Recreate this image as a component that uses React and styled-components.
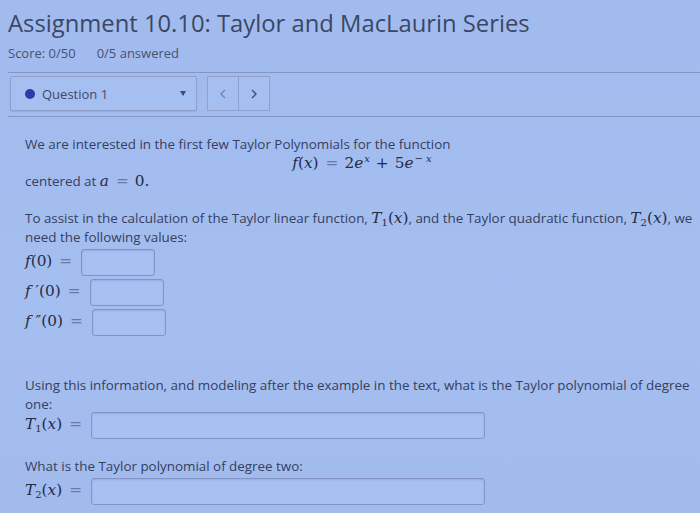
import React from 'react';
import styled, { createGlobalStyle } from 'styled-components';

const GlobalStyle = createGlobalStyle`
    html, body {
        margin: 0;
        padding: 0;
        background: #a3bcef;
    }
    body {
        font-family: 'Open Sans', 'Liberation Sans', sans-serif;
        color: #34405f;
    }
`;

const Page = styled.div`
    width: 700px;
    height: 513px;
    overflow: hidden;
    background: linear-gradient(180deg, #a2bbee 0%, #a5bef0 60%, #a2bbec 100%);
`;

const Header = styled.header`
    padding: 8px 0 0 8px;
`;

const Title = styled.h1`
    margin: 0;
    font-size: 23.8px;
    font-weight: 400;
    line-height: 30px;
    color: #3a4766;
`;

const ScoreRow = styled.div`
    display: flex;
    gap: 21px;
    margin-top: 6px;
    font-size: 13px;
    line-height: 18px;
    color: #46536f;
`;

const Toolbar = styled.div`
    display: flex;
    align-items: center;
    gap: 10px;
    margin: 10px 0 0 8px;
    padding: 3px 0 5px 2px;
    border-top: 1px solid #8596c0;
    border-bottom: 1px solid #8596c0;
`;

const Dropdown = styled.div`
    display: flex;
    align-items: center;
    width: 187px;
    height: 35px;
    box-sizing: border-box;
    padding: 0 10px 0 14px;
    border: 1px solid #8e9fca;
    border-radius: 2px;
    background: #a6bff1;
    box-shadow: 0 1px 1px rgba(60, 80, 130, 0.15);
    font-size: 13px;
    color: #3d4a6a;
`;

const Dot = styled.span`
    width: 10px;
    height: 10px;
    border-radius: 50%;
    background: #2f3aa6;
    margin-right: 7px;
`;

const Caret = styled.span`
    margin-left: auto;
    width: 0;
    height: 0;
    border-left: 3.5px solid transparent;
    border-right: 3.5px solid transparent;
    border-top: 5px solid #3f4c6c;
`;

const Pager = styled.div`
    display: flex;
`;

const PageButton = styled.div`
    display: flex;
    align-items: center;
    justify-content: center;
    width: 32px;
    height: 35px;
    box-sizing: border-box;
    border: 1px solid #90a1cb;
    margin-left: ${(p) => (p.joined ? '-1px' : '0')};
    color: ${(p) => (p.dim ? '#7386b2' : '#3f4c6c')};
    background: #a6bff1;
`;

const Content = styled.main`
    width: 668px;
    padding: 18px 0 0 25px;
    font-size: 13.4px;
    line-height: 19px;
    color: #34405f;
`;

const Para = styled.p`
    margin: ${(p) => p.top || 0}px 0 ${(p) => p.gap || 0}px 0;
`;

const Display = styled.div`
    text-align: center;
    line-height: 18px;
    height: 18px;
    padding-left: 6px;
`;

const M = styled.span`
    font-family: 'DejaVu Serif', 'Liberation Serif', serif;
    font-size: 15.3px;
    line-height: 1;
    color: #232b45;
    white-space: nowrap;
`;

const V = styled.i`
    font-style: italic;
`;

const Sub = styled.span`
    display: inline-block;
    font-size: 10px;
    line-height: 10px;
    transform: translateY(3px);
`;

const Sup = styled.span`
    display: inline-block;
    font-size: 10px;
    line-height: 10px;
    transform: translateY(-6px);
    font-style: italic;
    margin-left: 1px;
`;

const Eq = styled.span`
    margin: 0 6px 0 7px;
    color: #6a7aa4;
`;

const Plus = styled.span`
    margin: 0 6px;
`;

const AnswerRow = styled.div`
    display: flex;
    align-items: center;
    gap: 3px;
    height: 30px;
    margin-top: ${(p) => p.top || 0}px;
`;

const Box = styled.div`
    width: ${(p) => p.w}px;
    height: 27px;
    box-sizing: border-box;
    border: 1px solid #8194c3;
    border-radius: 3px;
    background: #a8c1f3;
    box-shadow: inset 0 1px 2px rgba(60, 80, 130, 0.18);
`;

const Chevron = ({ dir }) => (
    <svg width="8" height="10" viewBox="0 0 8 10">
        <path
            d={dir === 'left' ? 'M6 1 L2 5 L6 9' : 'M2 1 L6 5 L2 9'}
            fill="none"
            stroke="currentColor"
            strokeWidth="1.4"
        />
    </svg>
);

const App = () => (
    <Page>
        <GlobalStyle />
        <Header>
            <Title>Assignment 10.10: Taylor and MacLaurin Series</Title>
            <ScoreRow>
                <span>Score: 0/50</span>
                <span>0/5 answered</span>
            </ScoreRow>
        </Header>
        <Toolbar>
            <Dropdown>
                <Dot />
                Question 1
                <Caret />
            </Dropdown>
            <Pager>
                <PageButton dim>
                    <Chevron dir="left" />
                </PageButton>
                <PageButton joined>
                    <Chevron dir="right" />
                </PageButton>
            </Pager>
        </Toolbar>
        <Content>
            <Para>We are interested in the first few Taylor Polynomials for the function</Para>
            <Display>
                <M>
                    <V>f</V>(<V>x</V>)<Eq>=</Eq>2<V>e</V>
                    <Sup>x</Sup>
                    <Plus>+</Plus>5<V>e</V>
                    <Sup>− x</Sup>
                </M>
            </Display>
            <Para gap={18}>
                centered at{' '}
                <M>
                    <V>a</V>
                    <Eq>=</Eq>0.
                </M>
            </Para>
            <Para>
                To assist in the calculation of the Taylor linear function,{' '}
                <M>
                    <V>T</V>
                    <Sub>1</Sub>(<V>x</V>)
                </M>
                , and the Taylor quadratic function,{' '}
                <M>
                    <V>T</V>
                    <Sub>2</Sub>(<V>x</V>)
                </M>
                , we need the following values:
            </Para>
            <AnswerRow>
                <M>
                    <V>f</V>(0)<Eq>=</Eq>
                </M>
                <Box w={74} />
            </AnswerRow>
            <AnswerRow>
                <M>
                    <V>f</V> ′(0)<Eq>=</Eq>
                </M>
                <Box w={74} />
            </AnswerRow>
            <AnswerRow>
                <M>
                    <V>f</V> ″(0)<Eq>=</Eq>
                </M>
                <Box w={74} />
            </AnswerRow>
            <Para top={39}>
                Using this information, and modeling after the example in the text, what is the Taylor
                polynomial of degree one:
            </Para>
            <AnswerRow top={-4}>
                <M>
                    <V>T</V>
                    <Sub>1</Sub>(<V>x</V>)<Eq>=</Eq>
                </M>
                <Box w={394} />
            </AnswerRow>
            <Para top={17}>What is the Taylor polynomial of degree two:</Para>
            <AnswerRow>
                <M>
                    <V>T</V>
                    <Sub>2</Sub>(<V>x</V>)<Eq>=</Eq>
                </M>
                <Box w={394} />
            </AnswerRow>
        </Content>
    </Page>
);

export default App;
